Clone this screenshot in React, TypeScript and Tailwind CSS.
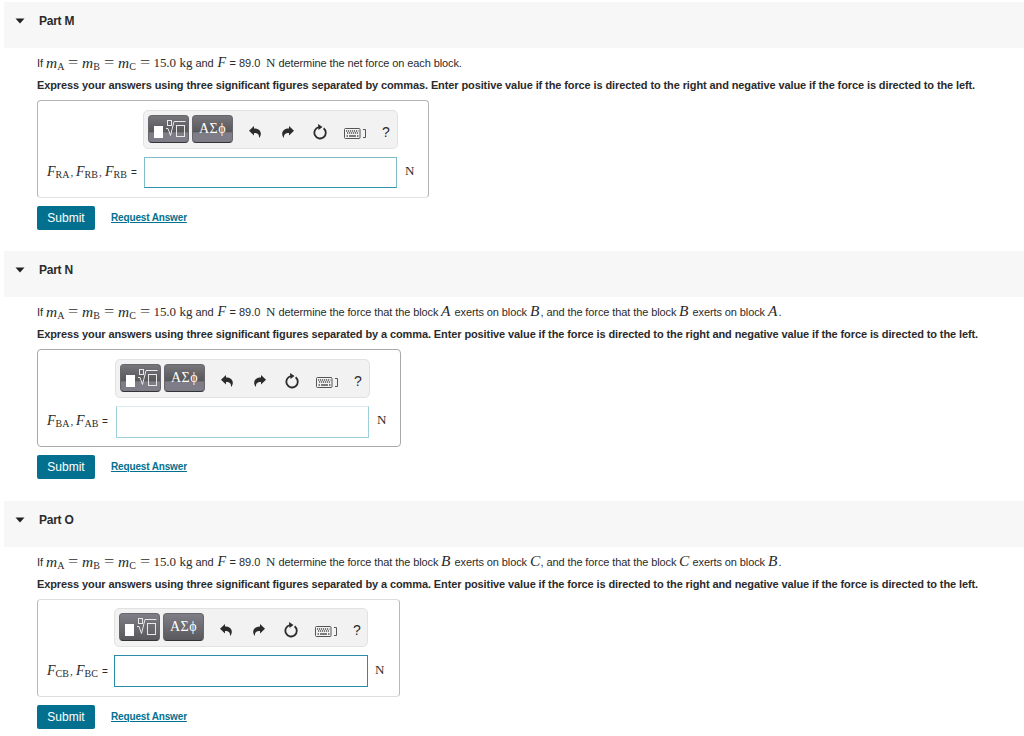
import React from 'react';
import clsx from 'clsx';

const SANS = "font-['Liberation_Sans',Arial,sans-serif]";
const SERIF = "font-['Liberation_Serif','Times_New_Roman',serif]";

interface PartProps {
  title: string;
  plural: string;
  blocks?: string[];
  labels: string[];
  height: string;
  labelWidth: string;
  boxWidth: string;
  border: string;
  toolbar: string;
  shade: string;
  input: string;
}

const Mass: React.FC<{ sub: string; width: string }> = ({ sub, width }) => (
  <span className={clsx(SERIF, 'relative top-[1px] text-[14px] tracking-normal', width)}>
    <i className="inline-block origin-left scale-x-110">m</i>
    <span className="relative left-[1px] top-[2px] text-[10px]">{sub}</span>
  </span>
);

const Equals: React.FC<{ width: string }> = ({ width }) => (
  <span className={clsx(SERIF, 'text-[14px]', width)}>
    <span className="inline-block origin-left scale-x-[1.3]">=</span>
  </span>
);

const Block: React.FC<{ name: string; width: string }> = ({ name, width }) => (
  <span className={clsx(SERIF, 'text-[14px] italic', width)}>
    <span className="inline-block origin-left scale-x-110">{name}</span>
  </span>
);

const Question: React.FC<{ blocks?: string[] }> = ({ blocks }) => (
  <p className="flex h-[22px] items-baseline whitespace-nowrap text-[11px] leading-[22px] tracking-[-0.1px]">
    <span className="w-[9px]">If</span>
    <Mass sub="A" width="w-[22px]" />
    <Equals width="w-[14px]" />
    <Mass sub="B" width="w-[22px]" />
    <Equals width="w-[14px]" />
    <Mass sub="C" width="w-[22px]" />
    <Equals width="w-[13.5px]" />
    <span className={clsx(SERIF, 'w-[26px] text-[13px]')}>15.0</span>
    <span className={clsx(SERIF, 'w-[16px] text-[13px]')}>kg</span>
    <span className="w-[22px]">and</span>
    <span className={clsx(SERIF, 'w-[12px] text-[14px] italic')}>F</span>
    <span className="w-[9.5px]">=</span>
    <span className="w-[27px] tracking-normal">89.0</span>
    <span className={clsx(SERIF, 'w-[12.5px] text-[13px]')}>N</span>
    {blocks ? (
      <>
        <span className="w-[162.5px]">determine the force that the block</span>
        <Block name={blocks[0]} width="w-[13.5px]" />
        <span className="w-[75.5px]">exerts on block</span>
        <Block name={blocks[1]} width="w-[10.5px]" />
        <span className="w-[138.5px]">, and the force that the block</span>
        <Block name={blocks[2]} width="w-[13.5px]" />
        <span className="w-[75.5px]">exerts on block</span>
        <Block name={blocks[3]} width="w-[10.5px]" />
        <span>.</span>
      </>
    ) : (
      <span>determine the net force on each block.</span>
    )}
  </p>
);

const BUTTON =
  'mb-[2px] flex h-[28px] w-[41px] items-center justify-center rounded-[4px] border border-[#66666c] border-b-[#333338] bg-linear-to-b';

const Toolbar: React.FC<{ className: string; shade: string }> = ({ className, shade }) => (
  <div
    className={clsx(
      'flex h-[39px] items-center rounded-[5px] border border-[#e2e2e2] bg-[#f2f2f2] pl-[4px] text-[#2b2b2b]',
      className,
    )}
  >
    <button className={clsx(BUTTON, shade)}>
      <svg className="shrink-0" width="36" height="24" viewBox="0 0 36 24" fill="none" stroke="#e8e8e8">
        <rect x="3" y="9" width="9" height="12" fill="#fff" stroke="none" />
        <rect x="16.5" y="3.5" width="4" height="5" />
        <path d="M15 11.5h2l2.5 7L23 4.5h11.5" />
        <rect x="25.5" y="8.5" width="8" height="11" />
      </svg>
    </button>
    <button className={clsx(BUTTON, SERIF, shade, 'ml-[3px] text-[14px] tracking-[0.5px] text-white')}>ΑΣϕ</button>
    <svg className="ml-[16px] mt-[5px]" width="12" height="12" viewBox="0 0 12 12" fill="currentColor">
      <path d="M0 4.7 5 0v2.6c4 0 7 2 6.8 5.6-.1 1.5-.8 2.8-1.8 3.8.3-3.5-1-5.1-5-5.1v2.5z" />
    </svg>
    <svg className="ml-[21px] mt-[5px]" width="12" height="12" viewBox="0 0 12 12" fill="currentColor">
      <path d="M12 4.7 7 0v2.6c-4 0-7 2-6.8 5.6.1 1.5.8 2.8 1.8 3.8-.3-3.5 1-5.1 5-5.1v2.5z" />
    </svg>
    <svg className="ml-[19px] mt-[4px]" width="14" height="16" viewBox="0 0 14 16" fill="none" stroke="currentColor">
      <path d="M10.6 4.3A5.7 5.7 0 1 1 6 3.2" strokeWidth="1.8" />
      <path d="M5 0 9.5 3l-4 3z" fill="currentColor" stroke="none" />
    </svg>
    <svg className="ml-[17px] mt-[8px]" width="17" height="11" viewBox="0 0 17 11" fill="none" stroke="#555">
      <rect x=".5" y=".5" width="15.5" height="10" rx="1" />
      <path d="M2 3h12.5M3 5h11" strokeWidth="1.3" strokeDasharray="1.2 .8" />
      <path d="M2.5 8H4m1 0h7m1 0h1.5" strokeWidth="1.3" />
    </svg>
    <svg className="ml-[2px] mt-[8px]" width="4" height="10" viewBox="0 0 4 10" fill="none" stroke="#555">
      <path d="M0 .5h2.5v8H0" />
    </svg>
    <span className="ml-[15px] mt-[5px] text-[14px] leading-none">?</span>
  </div>
);

const Part: React.FC<PartProps> = ({
  title,
  plural,
  blocks,
  labels,
  height,
  labelWidth,
  boxWidth,
  border,
  toolbar,
  shade,
  input,
}) => (
  <section className={height}>
    <header className="ml-[4px] flex h-[46px] items-center bg-[#f7f7f7] pb-[8px] pl-[11px]">
      <svg width="10" height="6" viewBox="0 0 10 6">
        <path d="M.5.5h9L5 5.5z" fill="#222" />
      </svg>
      <h2 className="ml-[14px] text-[12px] font-bold tracking-[-0.25px]">{title}</h2>
    </header>
    <div className="pl-[37px] pt-[4px]">
      <Question blocks={blocks} />
      <p className="h-[26px] whitespace-nowrap text-[11px] font-bold leading-[22px] tracking-[-0.105px]">
        Express your answers using three significant figures separated by {plural}. Enter positive value if the
        force is directed to the right and negative value if the force is directed to the left.
      </p>
      <div className={clsx('flex h-[98px] rounded-[4px] border pt-[9px]', boxWidth, border)}>
        <div className={clsx('flex shrink-0 items-baseline whitespace-nowrap pl-[9px] pt-[51px] leading-[22px]', labelWidth)}>
          {labels.map((label, i) => (
            <span key={i} className={clsx(SERIF, 'w-[29px] text-[14px]')}>
              <i>F</i>
              <span className="relative top-[2px] text-[10px]">{label}</span>
              {i < labels.length - 1 && <span className="ml-[1px] text-[11px]">,</span>}
            </span>
          ))}
          <span className="-ml-[3px] text-[10px]">=</span>
        </div>
        <div className="shrink-0">
          <Toolbar className={toolbar} shade={shade} />
          <input className={clsx('block border bg-white', input)} />
        </div>
        <span className={clsx(SERIF, 'ml-[7px] mt-[50px] text-[13px] leading-[22px]')}>N</span>
      </div>
      <div className="mt-[8px] flex items-center">
        <button className="h-[24px] w-[58px] rounded-[2px] bg-[#04708f] text-[12px] text-white">Submit</button>
        <a className="mb-[2px] ml-[16px] text-[10px] font-bold tracking-[-0.15px] text-[#04708f] underline">
          Request Answer
        </a>
      </div>
    </div>
  </section>
);

const App: React.FC = () => (
  <main className={clsx(SANS, 'h-[736px] overflow-hidden bg-white pt-[2px] text-[#2b2b2b]')}>
    <Part
      title="Part M"
      plural="commas"
      labels={['RA', 'RB', 'RB']}
      height="h-[249px]"
      labelWidth="w-[106px]"
      boxWidth="w-[392px]"
      border="border-[#b4b4b4] border-b-[#e2e2e2]"
      toolbar="-ml-[1px] w-[255px]"
      shade="from-[#77777b] from-0% via-[#58585b] via-60% to-[#7d7c87] to-65%"
      input="mt-[8px] h-[31px] w-[253px] border-[#7fbccb] border-b-[#2f93ab]"
    />
    <Part
      title="Part N"
      plural="a comma"
      blocks={['A', 'B', 'B', 'A']}
      labels={['BA', 'AB']}
      height="h-[250px]"
      labelWidth="w-[78px]"
      boxWidth="w-[364px]"
      border="border-[#a9a9a9]"
      toolbar="-ml-[1px] w-[255px]"
      shade="from-[#77777b] from-0% via-[#58585b] via-60% to-[#7d7c87] to-65%"
      input="mt-[8px] h-[32px] w-[253px] border-[#9fcfdb] border-t-[#dcecf0]"
    />
    <Part
      title="Part O"
      plural="a comma"
      blocks={['B', 'C', 'C', 'B']}
      labels={['CB', 'BC']}
      height="h-[235px]"
      labelWidth="w-[76px]"
      boxWidth="w-[363px]"
      border="border-[#b9b9b9] border-t-[#dedede] border-b-[#dedede]"
      toolbar="-mt-[1px] w-[254px]"
      shade="from-[#7f7e87] to-[#59595c]"
      input="mt-[8px] h-[32px] w-[254px] border-[#2a8ba4]"
    />
  </main>
);

export default App;
